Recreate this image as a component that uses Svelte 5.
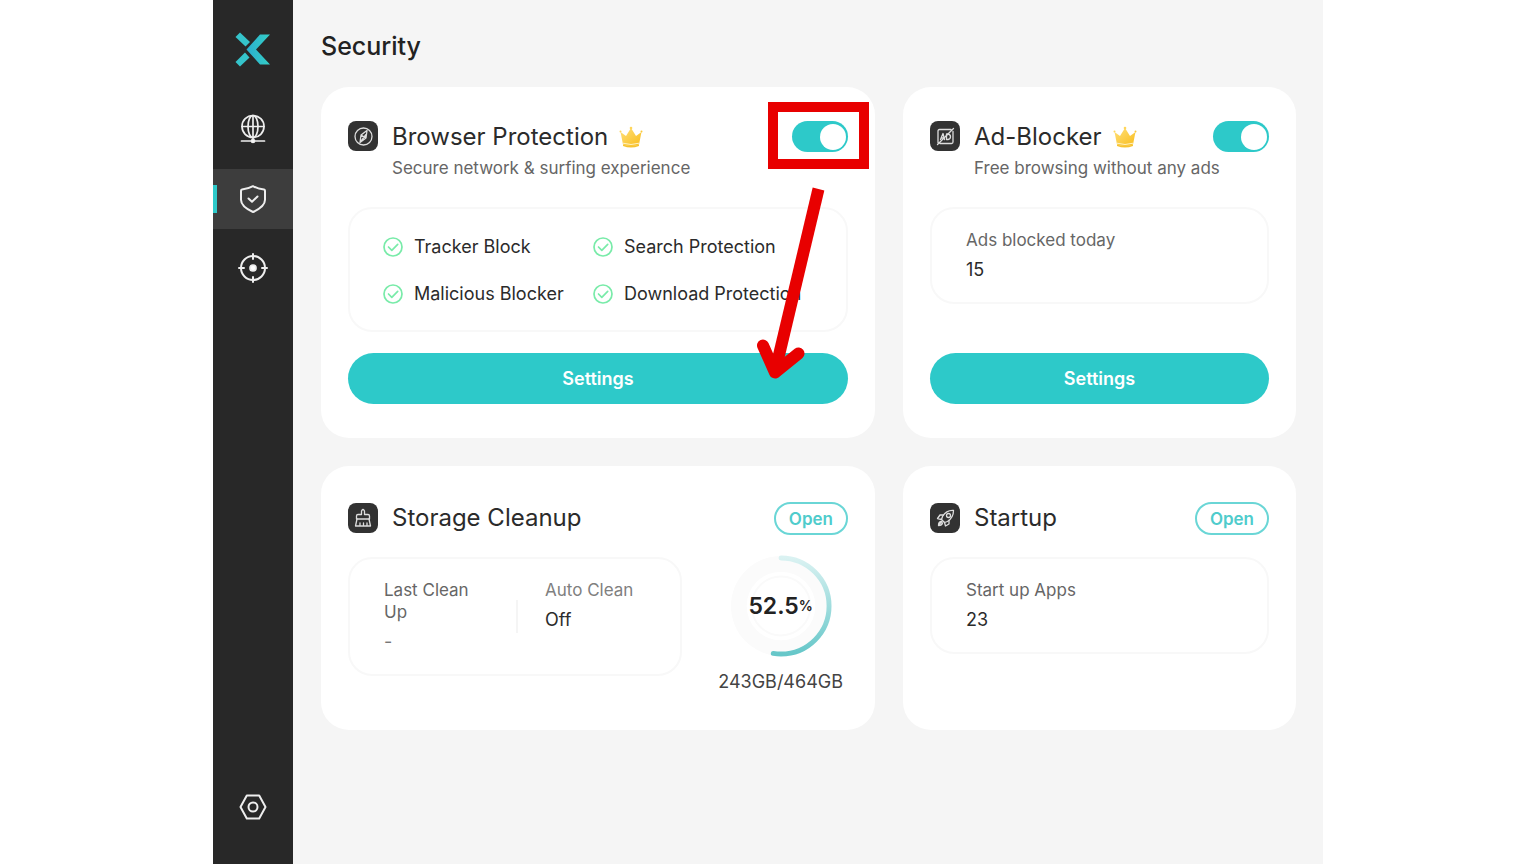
<script lang="ts">
  let browserProtection = $state(true);
  let adBlocker = $state(true);

  const protections = ["Tracker Block", "Search Protection", "Malicious Blocker", "Download Protection"];

  const used = 243;
  const capacity = 464;
  const percent = 52.5;

  // usage ring
  const R = 49;
  const C = 2 * Math.PI * R;
  const arc = $derived((percent / 100) * C);
</script>

{#snippet crown()}
  <svg class="crown" viewBox="0 0 24 22" aria-hidden="true">
    <defs>
      <linearGradient id="gold" x1="0" y1="0" x2="1" y2="1">
        <stop offset="0" stop-color="#ffe07a" />
        <stop offset="1" stop-color="#f9bd1c" />
      </linearGradient>
    </defs>
    <path d="M1.500 6l5.500 4 5-8 5 8 5.500-4-2.500 12.500q-8 3-16 0z" fill="url(#gold)" />
    <path d="M4 18.500q8 2.500 16 0v1.500q-8 3-16 0z" fill="#f7c331" />
    <path d="M4 17.200q8 2.600 16 0" fill="none" stroke="#fff3c4" stroke-width="1" />
    <circle cx="1.500" cy="5.500" r="1" fill="#ffd65c" />
    <circle cx="12" cy="2" r="1.300" fill="#ffd65c" />
    <circle cx="22.500" cy="5.500" r="1" fill="#fbc83a" />
  </svg>
{/snippet}

<div class="window">
  <nav class="sidebar" aria-label="Main">
    <svg class="logo" viewBox="0 0 36 36" aria-hidden="true">
      <defs>
        <linearGradient id="brand" x1="0" y1="0" x2="1" y2="0">
          <stop offset="0" stop-color="#2aaed0" />
          <stop offset="1" stop-color="#35cfc6" />
        </linearGradient>
      </defs>
      <path d="M25 2.500h10L21 17.500 35 32.500h-10L11.500 17.500z" fill="url(#brand)" />
      <path d="M5 .500l10 9.500-4.500 4.500L.500 5z" fill="#35c4cb" />
      <path d="M10 20.500l4.500 5L5 34.500.500 30z" fill="#35c4cb" />
    </svg>

    <a class="item" href="#network" aria-label="Network">
      <svg viewBox="0 0 32 32">
        <circle cx="16" cy="13.500" r="11" />
        <ellipse cx="16" cy="13.500" rx="5" ry="11" />
        <path d="M5 13.500h22M16 2.500v25M4.500 28h23" />
        <circle cx="16" cy="28" r="1.500" fill="#fff" />
      </svg>
    </a>
    <a class="item active" href="#security" aria-label="Security" aria-current="page">
      <svg viewBox="0 0 32 32">
        <path d="M16 3.200c3.500 2 7.500 3 11 3.300q1 .2 1 1.300v9c0 6-6 9.500-12 12.200C10 26.300 4 22.800 4 16.800v-9q0-1.100 1-1.300c3.500-.3 7.500-1.300 11-3.300z" stroke-width="2" />
        <path d="M11.500 15.500l3.500 3.300 5.500-5.300" stroke-width="2" />
      </svg>
    </a>
    <a class="item" href="#scan" aria-label="Scan">
      <svg viewBox="0 0 32 32">
        <circle cx="16" cy="15" r="12" stroke-width="2" />
        <circle cx="16" cy="15" r="3" fill="#fff" />
        <path d="M16 1v5M16 24v5M2 15h5M25 15h5" stroke-width="2" />
      </svg>
    </a>
    <a class="item bottom" href="#settings" aria-label="Settings">
      <svg viewBox="0 0 32 32">
        <path d="M9.800 4.500h12.400L28.500 16l-6.300 11.500H9.800L3.500 16z" stroke-width="2" />
        <circle cx="16" cy="16" r="4.500" stroke-width="2" />
      </svg>
    </a>
  </nav>

  <main>
    <h1>Security</h1>

    <div class="cards">
      <section class="card">
        <header>
          <span class="badge">
            <svg viewBox="0 0 30 30">
              <circle cx="15.500" cy="15.500" r="8.500" />
              <path d="M19 9.500l-1 7.500-6 4.500 1-7.500zM13 14l5 3M12 21.500l6-8" />
            </svg>
          </span>
          <div class="heading">
            <h2>Browser Protection {@render crown()}</h2>
            <p>Secure network &amp; surfing experience</p>
          </div>
          <div class="switch-wrap">
            <input class="switch" type="checkbox" role="switch" aria-label="Browser Protection" bind:checked={browserProtection} />
            <svg class="callout" viewBox="0 0 116 286" aria-hidden="true">
              <rect x="18" y="7" width="91" height="57" />
              <path d="M63.500 89L20 272" stroke-width="12" />
              <path d="M8 245.500l12 27 23.500-19" stroke-width="12" stroke-linecap="round" stroke-linejoin="round" />
            </svg>
          </div>
        </header>
        <ul class="panel checks">
          {#each protections as name (name)}
            <li>
              <svg viewBox="0 0 20 20" aria-hidden="true">
                <circle cx="10" cy="10" r="9" />
                <path d="M5.500 10l3.300 3.300 5.900-6" />
              </svg>
              {name}
            </li>
          {/each}
        </ul>
        <button class="primary">Settings</button>
      </section>

      <section class="card">
        <header>
          <span class="badge">
            <svg viewBox="0 0 30 30">
              <path d="M8 21.500V10q0-1.500 1.500-1.500H21M23 10.500V21q0 1.500-1.500 1.500H10M7.500 23.500l16-16" />
              <path d="M10.500 18.500l2.500-6 1.500 6M11.500 17h3M16.500 18.500v-5.500h1.500q2.500.5 2.500 2.700t-2.500 2.800z" />
            </svg>
          </span>
          <div class="heading">
            <h2>Ad-Blocker {@render crown()}</h2>
            <p>Free browsing without any ads</p>
          </div>
          <div class="switch-wrap">
            <input class="switch" type="checkbox" role="switch" aria-label="Ad-Blocker" bind:checked={adBlocker} />
          </div>
        </header>
        <dl class="panel">
          <div>
            <dt>Ads blocked today</dt>
            <dd>15</dd>
          </div>
        </dl>
        <button class="primary">Settings</button>
      </section>

      <section class="card compact">
        <header>
          <span class="badge">
            <svg viewBox="0 0 30 30">
              <path d="M13.500 11.500V8q1.500-3 3 0v3.500h3.500q1.500 0 1.500 1.500v3h-13v-3q0-1.500 1.500-1.500z" />
              <path d="M9 16l-1.500 7h15L21 16M12 23v-3M15.500 23v-3M19 23v-3" />
            </svg>
          </span>
          <div class="heading"><h2>Storage Cleanup</h2></div>
          <button class="outline">Open</button>
        </header>
        <div class="storage">
          <dl class="panel split">
            <div>
              <dt>Last Clean Up</dt>
              <dd class="empty">-</dd>
            </div>
            <div>
              <dt class="soft">Auto Clean</dt>
              <dd>Off</dd>
            </div>
          </dl>
          <div class="usage">
            <div class="ring">
              <svg viewBox="0 0 104 104" role="img" aria-label={`${percent}% used`}>
                <defs>
                  <linearGradient id="ring" x1="0" y1="0" x2="1" y2="0">
                    <stop offset="0" stop-color="#66c7c9" />
                    <stop offset="1" stop-color="#daf2f2" />
                  </linearGradient>
                </defs>
                <circle cx="52" cy="52" r="51" fill="#fbfbfb" />
                <circle cx="52" cy="52" r="35" fill="#fff" />
                <circle cx="52" cy="52" r="30" fill="#fff" stroke="#fafafa" stroke-width="2" />
                <circle
                  cx="52" cy="52" r={R} fill="none" stroke="url(#ring)" stroke-width="5"
                  stroke-linecap="round" stroke-dasharray={`${arc} ${C - arc}`}
                  transform="rotate(-90 52 52)"
                />
              </svg>
              <span class="percent">{percent}<small>%</small></span>
            </div>
            <span class="capacity">{used}GB/{capacity}GB</span>
          </div>
        </div>
      </section>

      <section class="card compact">
        <header>
          <span class="badge">
            <svg viewBox="0 0 30 30">
              <path d="M23.500 7.500q-7-.5-11 6l-1 3 3 3 3-1q6-4 6-11z" />
              <path d="M13.500 12l-3.500 0-2.500 3.500 4 1M19 17.500v3.500L15.500 23l-1-3.500" />
              <circle cx="18.500" cy="12.500" r="2" />
              <path d="M11 18.500q-2.500.5-2.500 4 3.500 0 4-2.500M9 21.500l3-3" />
            </svg>
          </span>
          <div class="heading"><h2>Startup</h2></div>
          <button class="outline">Open</button>
        </header>
        <dl class="panel">
          <div>
            <dt>Start up Apps</dt>
            <dd>23</dd>
          </div>
        </dl>
      </section>
    </div>
  </main>
</div>

<style>
  :global(body) { margin: 0; background: #fff; }

  .window {
    display: grid;
    grid-template-columns: 80px 1fr;
    min-height: 100vh;
    margin: 0 13.867%;
    background: #f5f5f5;
    color: #2b2b2b;
    font-family: Inter, "Liberation Sans", sans-serif;
    font-size: 18px;
    line-height: 22px;
  }
  h1, h2, p, ul, dl, dd { margin: 0; padding: 0; font-weight: 400; }
  button { font: inherit; cursor: pointer; }

  .sidebar {
    display: flex;
    flex-direction: column;
    gap: 10px;
    box-sizing: border-box;
    padding: 32px 0 27px;
    background: #282828;
  }
  .logo { width: 36px; margin: 0 auto 21px; }
  .item {
    display: flex;
    align-items: center;
    justify-content: center;
    height: 60px;
  }
  .item svg {
    width: 32px;
    fill: none;
    stroke: #eee;
    stroke-width: 1.700;
    stroke-linecap: round;
    stroke-linejoin: round;
  }
  .active { background: linear-gradient(#2dc9c9, #2dc9c9) left center / 4px 28px no-repeat, #3d3d3d; }
  .bottom { margin-top: auto; }

  main { padding: 30px 27px 28px 28px; }
  h1 { font-size: 25px; font-weight: 500; line-height: 32px; color: #222; }

  .cards {
    display: grid;
    grid-template-columns: minmax(0, 554fr) minmax(0, 393fr);
    gap: 28px;
    margin-top: 25px;
  }
  .card {
    display: flex;
    flex-direction: column;
    padding: 34px 27px;
    border-radius: 28px;
    background: #fff;
  }
  .compact { padding: 37px 27px; }

  header { display: flex; gap: 14px; }
  .heading { flex: 1; min-width: 0; white-space: nowrap; }
  h2 {
    display: flex;
    align-items: center;
    gap: 11px;
    font-size: 24px;
    line-height: 32px;
  }
  header p { margin-top: 5px; font-size: 17px; line-height: 20px; color: #666; }
  .crown { width: 24px; }
  .badge {
    flex: none;
    width: 30px;
    height: 30px;
    border-radius: 8px;
    background: #323232;
  }
  .badge svg {
    display: block;
    fill: none;
    stroke: #ddd;
    stroke-width: 1.300;
    stroke-linecap: round;
    stroke-linejoin: round;
  }

  .switch-wrap { position: relative; flex: none; width: 56px; }
  .switch {
    appearance: none;
    display: flex;
    align-items: center;
    width: 56px;
    height: 31px;
    margin: 0;
    padding: 2px;
    box-sizing: border-box;
    border-radius: 16px;
    background: #c9c9c9;
    cursor: pointer;
  }
  .switch::before {
    content: "";
    width: 26px;
    height: 26px;
    border-radius: 50%;
    background: #fff;
  }
  .switch:checked { justify-content: flex-end; background: #2dc9c9; }
  .callout {
    position: absolute;
    top: -21px;
    right: -23px;
    z-index: 1;
    width: 116px;
    fill: none;
    stroke: #e80000;
    stroke-width: 10;
    pointer-events: none;
  }

  .panel {
    margin-top: 29px;
    padding: 20px 34px 21px;
    border: 2px solid #f8f8f8;
    border-radius: 24px;
  }
  dt { font-size: 17px; color: #666; }
  dd { margin-top: 8px; }
  .soft { color: #808080; }
  .empty { color: #777; }

  .checks {
    display: grid;
    grid-template-columns: 210px 1fr;
    row-gap: 25px;
    margin-bottom: 21px;
    padding: 27px 33px 25px;
    list-style: none;
  }
  .checks li { display: flex; align-items: center; gap: 11px; white-space: nowrap; }
  .checks svg {
    flex: none;
    width: 20px;
    fill: none;
    stroke: #79eba9;
    stroke-width: 1.700;
    stroke-linecap: round;
    stroke-linejoin: round;
  }

  .primary {
    height: 51px;
    margin-top: auto;
    border: 0;
    border-radius: 26px;
    background: #2dc9c9;
    color: #fff;
    font-weight: 600;
  }
  .outline {
    height: 33px;
    margin-top: -1px;
    padding: 0 13px;
    border: 2px solid #6ad6d6;
    border-radius: 17px;
    background: none;
    color: #4fcccc;
    font-size: 17px;
    font-weight: 600;
  }

  .compact h2 { line-height: 30px; }
  .compact .panel { margin-top: 22px; }
  .storage { display: flex; align-items: flex-start; }
  .split { flex: 1; display: grid; grid-template-columns: 133px 1fr; align-items: start; position: relative; }
  .split div:first-child { padding-right: 28px; }
  .split div + div { padding-left: 28px; }
  .split div + div::before {
    content: "";
    position: absolute;
    top: 41px;
    bottom: 41px;
    left: 166px;
    border-left: 2px solid #f5f5f5;
  }

  .usage {
    display: flex;
    flex-direction: column;
    align-items: center;
    gap: 14px;
    margin: 20px 5px 0 36px;
  }
  .ring { position: relative; width: 102px; height: 102px; }
  .ring svg { display: block; }
  .percent {
    position: absolute;
    inset: 0;
    display: flex;
    align-items: center;
    justify-content: center;
    font-size: 23px;
    font-weight: 600;
    color: #222;
  }
  .percent small { font-size: 14px; }
  .capacity { color: #444; }
</style>
